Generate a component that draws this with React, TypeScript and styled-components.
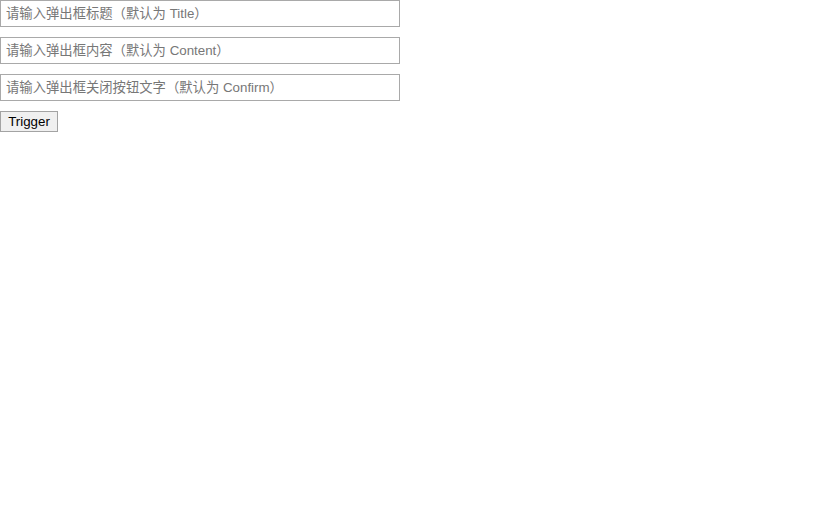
import React from "react";
import styled, { createGlobalStyle } from "styled-components";

const Global = createGlobalStyle`
  html, body { margin: 0; padding: 0; background: #fff; }
  body { font-family: "Liberation Sans", "Noto Sans CJK SC", sans-serif; }
`;

const Form = styled.div`
  display: flex;
  flex-direction: column;
  align-items: flex-start;
  gap: 10px;
`;

const Field = styled.input`
  display: block;
  box-sizing: border-box;
  width: 400px;
  height: 27px;
  margin: 0;
  padding: 0 5px;
  border: 1px solid #a9a9a9;
  border-radius: 0;
  outline: none;
  font-family: "Liberation Sans", "Noto Sans CJK SC", sans-serif;
  font-size: 13.333px;
  color: #000;
  background: #fff;
  &::placeholder {
    color: #777;
  }
`;

const Button = styled.button`
  box-sizing: border-box;
  width: 58px;
  height: 21px;
  margin: 0;
  padding: 0 6px;
  border: 1px solid #a3a3a3;
  border-radius: 0;
  background: #f0f0f0;
  font-family: "Liberation Sans", "Noto Sans CJK SC", sans-serif;
  font-size: 13.333px;
  color: #000;
  line-height: 19px;
`;

export default function App() {
  return (
    <>
      <Global />
      <Form>
        <Field placeholder="请输入弹出框标题（默认为 Title）" />
        <Field placeholder="请输入弹出框内容（默认为 Content）" />
        <Field placeholder="请输入弹出框关闭按钮文字（默认为 Confirm）" />
        <Button>Trigger</Button>
      </Form>
    </>
  );
}
